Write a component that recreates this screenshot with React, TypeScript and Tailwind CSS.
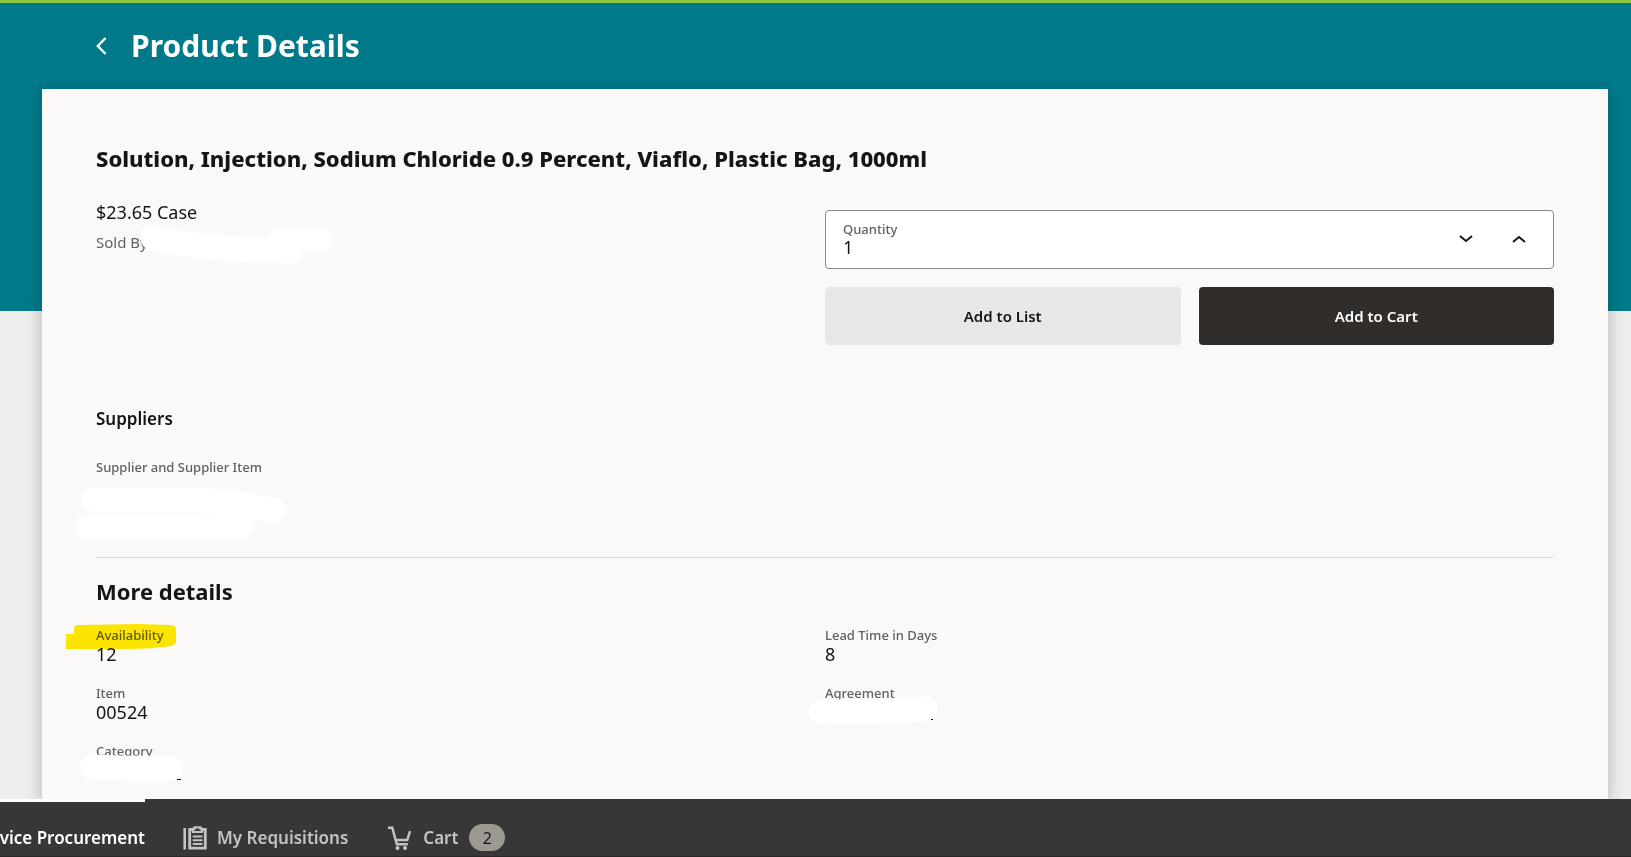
import type { ReactNode } from 'react';

type FieldProps = {
  label: string;
  value?: string;
  children?: ReactNode;
};

function Field({ label, value, children }: FieldProps) {
  return (
    <div className="relative h-[58px]">
      <dt className="text-[13px] leading-[18px] font-medium text-[#63605d]">{label}</dt>
      <dd className="text-[18px] leading-5">{value}</dd>
      {children}
    </div>
  );
}

function ClipboardIcon() {
  return (
    <svg width="24" height="24" viewBox="0 0 24 24" fill="none" stroke="currentColor" aria-hidden="true">
      <path d="M1.7 2v21.500" strokeWidth="2.600" />
      <path d="M10 3.500H6.700v18.700H22.300V3.500H19" strokeWidth="2.800" />
      <path d="M10 6V2.800h1.500V1.400h6v1.400H19V6z" strokeWidth="2.200" />
      <path d="M9.700 10.500h9.800M9.700 14.300h9.800M9.700 18h9.800" strokeWidth="2" />
    </svg>
  );
}

function CartIcon() {
  return (
    <svg width="24" height="24" viewBox="0 0 24 24" fill="none" stroke="currentColor" aria-hidden="true">
      <path d="M0 1.800h4.300L8.800 18.200h11M7.300 14h12L22 5.200" strokeWidth="2.400" />
      <circle cx="9.500" cy="22" r="2" fill="currentColor" stroke="none" />
      <circle cx="17" cy="22" r="2" fill="currentColor" stroke="none" />
    </svg>
  );
}

export default function App() {
  return (
    <div className="flex h-screen flex-col overflow-hidden font-['Noto_Sans',sans-serif] text-[#161513]">
      <main className="flex min-h-0 flex-1 flex-col overflow-hidden border-t-3 border-[#8dc63f] bg-[linear-gradient(#007a8a_308px,#f0eeec_308px)]">
        <header className="flex h-[86px] shrink-0 items-center gap-6 pl-24 text-white">
          <button type="button" aria-label="Back">
            <svg width="11" height="18" viewBox="0 0 11 18" fill="none" stroke="currentColor" strokeWidth="2.400">
              <path d="M9.600 1 1.800 9l7.800 8" />
            </svg>
          </button>
          <h1 className="text-[30px] leading-10 font-bold">Product Details</h1>
        </header>

        <section className="mr-[23px] ml-[42px] flex-1 bg-[#fbf9f8] px-[54px] pt-[53px] shadow-[0_4px_16px_rgba(0,0,0,0.25)]">
          <h2 className="text-[22px] leading-8 font-extrabold">
            Solution, Injection, Sodium Chloride 0.9 Percent, Viaflo, Plastic Bag, 1000ml
          </h2>

          <div className="mt-[25px] grid grid-cols-2">
            <div className="relative">
              <p className="text-[18px] leading-[26px]">$23.65 Case</p>
              <p className="text-[15px] leading-[34px] text-[#63605d]">Sold By</p>
              <svg className="absolute top-6 left-10" width="210" height="48" viewBox="0 0 210 48" fill="none" stroke="#fff" strokeWidth="25" strokeLinecap="round" aria-hidden="true">
                <path d="M17 15q50 12 137 13M145 17h39" />
              </svg>
            </div>

            <form className="mt-[11px]" onSubmit={e => e.preventDefault()}>
              <div className="flex h-[59px] items-center rounded-sm border border-[#8b8886] bg-white pr-[22px] pb-0.5 pl-[17px]">
                <div className="flex flex-1 flex-col">
                  <label htmlFor="quantity" className="text-[13px] leading-4 font-medium text-[#63605d]">Quantity</label>
                  <input id="quantity" type="text" defaultValue="1" className="h-5 w-full text-[18px] leading-5 outline-none" />
                </div>
                <div className="flex gap-[29px]">
                  <button type="button" aria-label="Decrease quantity" className="flex w-6 justify-center">
                    <svg width="14" height="8" viewBox="0 0 14 8" fill="none" stroke="currentColor" strokeWidth="2">
                      <path d="M1 1l6 5 6-5" />
                    </svg>
                  </button>
                  <button type="button" aria-label="Increase quantity" className="flex w-6 justify-center">
                    <svg width="14" height="8" viewBox="0 0 14 8" fill="none" stroke="currentColor" strokeWidth="2">
                      <path d="M1 7l6-5 6 5" />
                    </svg>
                  </button>
                </div>
              </div>
              <div className="mt-[18px] grid grid-cols-2 gap-[18px]">
                <button type="button" className="h-[58px] rounded-sm bg-[#e8e7e5] text-[15px] font-semibold">Add to List</button>
                <button type="submit" className="h-[58px] rounded-sm bg-[#312d2a] text-[15px] font-semibold text-white">Add to Cart</button>
              </div>
            </form>
          </div>

          <div className="relative mt-[60px] h-[153px] border-b border-[#dedcda]">
            <h3 className="text-[17px] leading-7 font-semibold">Suppliers</h3>
            <p className="mt-6 text-[13px] leading-5 font-medium text-[#63605d]">Supplier and Supplier Item</p>
            <svg className="absolute top-20 -left-6" width="216" height="56" viewBox="0 0 216 56" fill="none" stroke="#fff" strokeWidth="25" strokeLinecap="round" aria-hidden="true">
              <path d="M22 14.500c40 1 80 1 110 1q25 1 69 10M16 42h153" />
            </svg>
          </div>

          <h3 className="mt-[17px] text-[22px] leading-8 font-bold">More details</h3>
          <dl className="mt-[19px] grid grid-cols-2">
            <Field label="Availability" value="12">
              <svg className="absolute -top-0.5 -left-8 mix-blend-multiply" width="116" height="28" viewBox="0 0 116 28" aria-hidden="true">
                <path fill="#ffea00" d="M2 10h8V3q1-2 4-2l60-1 33 1q5 1 5 4v13q-1 3-5 4-20 3-43 3H2z" />
              </svg>
            </Field>
            <Field label="Lead Time in Days" value="8" />
            <Field label="Item" value="00524" />
            <Field label="Agreement">
              <svg className="absolute top-2 -left-4" width="132" height="36" viewBox="0 0 132 36" aria-hidden="true">
                <path d="M13 20q50 0 103-3" fill="none" stroke="#fff" strokeWidth="25" strokeLinecap="round" />
                <path d="M122 27h2v1h-2z" fill="#161513" />
              </svg>
            </Field>
            <Field label="Category">
              <svg className="absolute top-2 -left-4" width="120" height="36" viewBox="0 0 120 36" aria-hidden="true">
                <path d="M13 17q40 2 78 1" fill="none" stroke="#fff" strokeWidth="25" strokeLinecap="round" />
                <path d="M97 29h4v1h-4z" fill="#161513" />
              </svg>
            </Field>
          </dl>
        </section>
      </main>

      <nav className="flex h-[58px] shrink-0 items-stretch border-b border-[#2b2627] bg-[#373737] text-[17px] font-semibold text-[#c4c4c4]">
        <a href="#procurement" className="flex w-[145px] items-center justify-end border-t-3 border-white pt-[18px] whitespace-nowrap text-white">
          vice Procurement
        </a>
        <a href="#requisitions" className="ml-[38px] flex items-center gap-[10px] pt-5">
          <ClipboardIcon />
          My Requisitions
        </a>
        <a href="#cart" className="ml-10 flex items-center gap-[11px] pt-5">
          <CartIcon />
          Cart
          <span className="flex h-[27px] w-9 items-center justify-center rounded-full bg-[#9e9892] text-[16px] font-normal text-[#161513]">2</span>
        </a>
      </nav>
    </div>
  );
}
